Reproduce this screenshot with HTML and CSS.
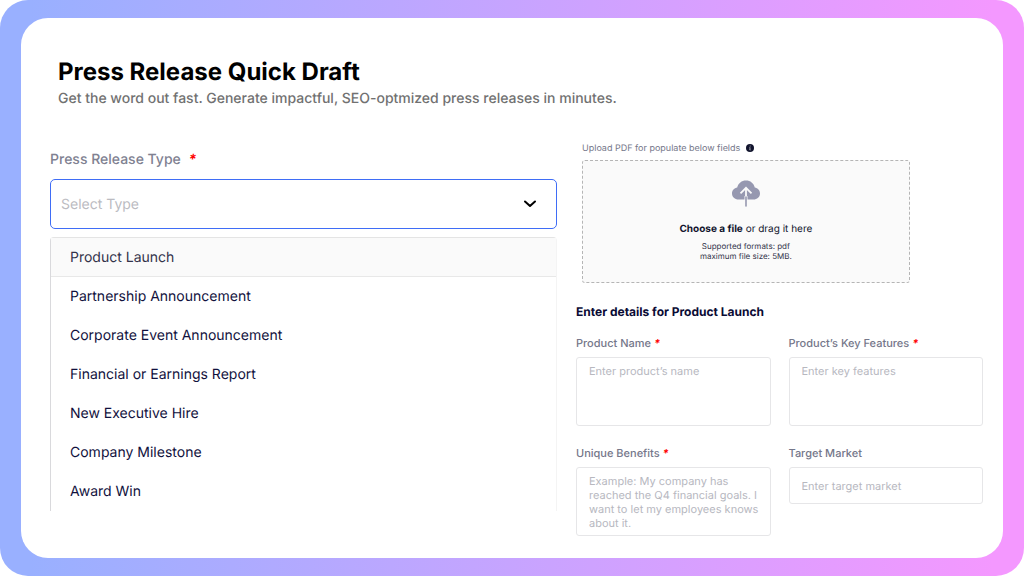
FILE: index.html
```html
<!DOCTYPE html>
<html lang="en">
<head>
<meta charset="utf-8">
<meta name="viewport" content="width=device-width, initial-scale=1">
<title>Press Release Quick Draft</title>
<link rel="stylesheet" href="styles.css">
</head>
<body>
<div class="frame">
<main class="card">
  <header class="intro">
    <h1 class="title">Press Release Quick Draft</h1>
    <p class="subtitle">Get the word out fast. Generate impactful, SEO-optmized press releases in minutes.</p>
  </header>
  <form class="columns">
    <section class="type">
      <label class="type-label" for="type">Press Release Type <span class="star">*</span></label>
      <div class="select-wrap">
        <select class="select" id="type" required>
          <option value="">Select Type</option>
        </select>
        <svg class="chevron" viewBox="0 0 14 14" aria-hidden="true"><path d="M2 4.500 7 9 12 4.500"/></svg>
      </div>
      <div class="options">
        <button type="button" class="option option-active">Product Launch</button>
        <button type="button" class="option">Partnership Announcement</button>
        <button type="button" class="option">Corporate Event Announcement</button>
        <button type="button" class="option">Financial or Earnings Report</button>
        <button type="button" class="option">New Executive Hire</button>
        <button type="button" class="option">Company Milestone</button>
        <button type="button" class="option">Award Win</button>
      </div>
    </section>
    <section class="details">
      <div class="upload">
        <div class="upload-label">Upload PDF for populate below fields
          <svg class="info" viewBox="0 0 8 8" aria-hidden="true"><circle cx="4" cy="4" r="4" fill="#11142d"/><path d="M4.2 1.6v.9M3.5 3.6h.6L3.8 6h.7" fill="none" stroke="#fff" stroke-width=".6"/></svg>
        </div>
        <button type="button" class="drop">
          <svg class="cloud" viewBox="0 0 28 28" aria-hidden="true">
            <path d="M6.500 20.500C2.900 20.500 0 18 0 14.500C0 11.300 2.300 9 5.200 8.500C6.300 4.200 9.600 1.500 14 1.500C18.400 1.500 21.700 4.200 22.800 8.500C25.700 9 28 11.300 28 14.500C28 18 25.100 20.500 21.500 20.500Z" fill="#9698b0"/>
            <path d="M14 20.500V9M8.500 14.300 14 8.800l5.500 5.500" fill="none" stroke="#fafafa" stroke-width="1.800"/>
            <path d="M14 17V27" fill="none" stroke="#fafafa" stroke-width="3"/>
            <path d="M14 18V27" fill="none" stroke="#9698b0" stroke-width="1.600" stroke-linecap="round"/>
          </svg>
          <span class="choose"><b>Choose a file</b> or drag it here</span>
          <span class="hint">Supported formats: pdf<br>maximum file size: 5MB.</span>
        </button>
      </div>
      <h2 class="details-title">Enter details for Product Launch</h2>
      <div class="fields">
        <div class="field">
          <label class="label" for="name">Product Name <span class="star">*</span></label>
          <textarea class="control area" id="name" placeholder="Enter product’s name"></textarea>
        </div>
        <div class="field">
          <label class="label" for="features">Product’s Key Features <span class="star">*</span></label>
          <textarea class="control area" id="features" placeholder="Enter key features"></textarea>
        </div>
        <div class="field">
          <label class="label" for="benefits">Unique Benefits <span class="star">*</span></label>
          <textarea class="control area" id="benefits" placeholder="Example: My company has reached the Q4 financial goals. I want to let my employees knows about it."></textarea>
        </div>
        <div class="field">
          <label class="label" for="market">Target Market</label>
          <input class="control line" id="market" type="text" placeholder="Enter target market">
        </div>
      </div>
    </section>
  </form>
</main>
</div>
</body>
</html>
```
FILE: styles.css
```css
* {
  box-sizing: border-box;
}

body {
  margin: 0;
  background: #fff;
  color: #11142d;
  font-family: Inter, "Liberation Sans", sans-serif;
  text-rendering: geometricPrecision;
}

button,
input,
select,
textarea {
  font: inherit;
  color: inherit;
  text-rendering: inherit;
}

.frame {
  display: flex;
  min-height: 100vh;
  padding: 18px 21px;
  border-radius: 28px;
  background: linear-gradient(90deg, #99b0ff 3%, #f498ff 97%);
}

.card {
  flex: 1;
  padding: 38px 20px 20px 29px;
  border-radius: 27px;
  background: #fff;
}

.intro {
  padding-left: 8px;
}

.title {
  margin: 0;
  color: #000;
  font-size: 24px;
  font-weight: 700;
  line-height: 32px;
}

.subtitle {
  margin: 0;
  color: #717171;
  font-size: 14px;
  font-weight: 500;
  line-height: 22px;
}

.columns {
  display: grid;
  grid-template-columns: 507fr 407fr;
  gap: 19px;
  padding-top: 28px;
}

.type {
  display: flex;
  flex-direction: column;
  gap: 8px;
  padding-top: 11px;
}

.type-label {
  color: #808191;
  font-size: 14px;
  font-weight: 500;
  line-height: 22px;
}

.star {
  color: #f00;
  font-style: italic;
  font-weight: 700;
}

.type-label .star {
  padding-left: 4px;
}

.select-wrap {
  display: grid;
  align-items: center;
}

.select-wrap > * {
  grid-area: 1 / 1;
}

.select {
  width: 100%;
  height: 50px;
  padding: 0 10px;
  border: 1px solid #3f6df6;
  border-radius: 5px;
  background: #fff;
  color: #bbbbc1;
  font-size: 14px;
  appearance: none;
}

.chevron {
  justify-self: end;
  width: 14px;
  height: 14px;
  margin-right: 20px;
  fill: none;
  stroke: #000;
  stroke-width: 2;
  stroke-linecap: round;
  stroke-linejoin: round;
  pointer-events: none;
}

.options {
  display: flex;
  flex-direction: column;
  border-top: 1px solid #e4e4e4;
  border-right: 1px solid #f4f4f4;
  border-left: 1px solid #d9d9dc;
  border-radius: 4px 4px 0 0;
}

.option {
  height: 39px;
  padding: 0 19px;
  border: 0;
  background: none;
  color: #11113d;
  font-size: 14px;
  text-align: left;
}

.option-active {
  border-bottom: 1px solid #e8e8e8;
  background: #fafafa;
  color: #33334a;
}

.upload {
  width: 82%;
  padding-left: 6px;
}

.upload-label {
  display: flex;
  align-items: center;
  gap: 6px;
  height: 20px;
  margin-bottom: 2px;
  color: #75778a;
  font-size: 9px;
}

.info {
  width: 8px;
  height: 8px;
}

.drop {
  display: flex;
  flex-direction: column;
  align-items: center;
  width: 100%;
  height: 123px;
  padding: 18px 8px 8px;
  border: 1px dashed #b5b5b5;
  border-radius: 3px;
  background: #fafafa;
}

.cloud {
  width: 28px;
  height: 28px;
}

.choose {
  margin-top: 14px;
  font-size: 10px;
  line-height: 16px;
}

.hint {
  margin-top: 4px;
  color: #33344a;
  font-size: 8px;
  line-height: 10px;
}

.details-title {
  margin: 19px 0 11px;
  color: #0b0b35;
  font-size: 12px;
  font-weight: 700;
  line-height: 20px;
}

.fields {
  display: grid;
  grid-template-columns: 1fr 1fr;
  gap: 17px 18px;
}

.field {
  display: flex;
  flex-direction: column;
  gap: 4px;
}

.label {
  color: #75778a;
  font-size: 11px;
  font-weight: 500;
  line-height: 20px;
}

.control {
  width: 100%;
  padding: 6px 8px 6px 12px;
  border: 1px solid #e6e6e8;
  border-radius: 3px;
  background: #fff;
  font-size: 11px;
  line-height: 14px;
}

.control::placeholder {
  color: #b7b8bf;
}

.area {
  height: 69px;
  overflow: hidden;
  resize: none;
}

.line {
  height: 37px;
}
```
